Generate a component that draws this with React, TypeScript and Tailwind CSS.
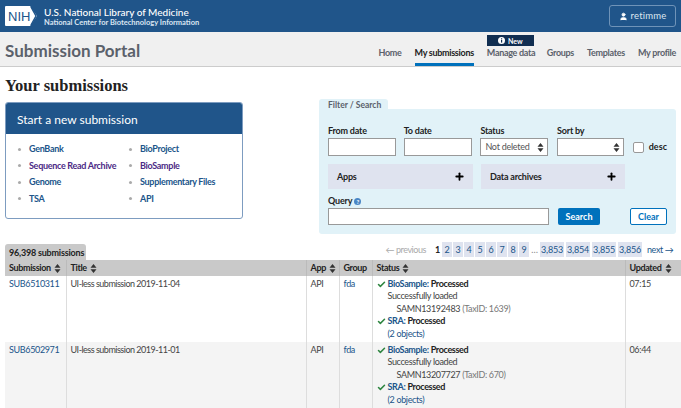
import { Plus, User, Check } from 'lucide-react'

const leftLinks = [
  { label: 'GenBank', visited: false },
  { label: 'Sequence Read Archive', visited: true },
  { label: 'Genome', visited: false },
  { label: 'TSA', visited: false },
]

const rightLinks = [
  { label: 'BioProject', visited: false },
  { label: 'BioSample', visited: true },
  { label: 'Supplementary Files', visited: false },
  { label: 'API', visited: false },
]

const pages = ['2', '3', '4', '5', '6', '7', '8', '9']
const lastPages = ['3,853', '3,854', '3,855', '3,856']

const rows = [
  { id: 'SUB6510311', title: 'UI-less submission 2019-11-04', sample: 'SAMN13192483', tax: '(TaxID: 1639)', time: '07:15', shade: false },
  { id: 'SUB6502971', title: 'UI-less submission 2019-11-01', sample: 'SAMN13207727', tax: '(TaxID: 670)', time: '06:44', shade: true },
]

function SortIcon({ className = 'inline-block ml-[3px]' }: { className?: string }) {
  return (
    <svg width="7" height="9" viewBox="0 0 7 9" className={`${className} fill-[#333]`}>
      <path d="M3.5 0 L6.5 3.8 H0.5 Z M3.5 9 L0.5 5.2 H6.5 Z" />
    </svg>
  )
}

function NihLogo() {
  return (
    <svg width="32" height="20" viewBox="0 0 32 20" className="shrink-0">
      <path d="M1 0 H25 L32 10 L25 20 H1 a1 1 0 0 1 -1 -1 V1 a1 1 0 0 1 1 -1 Z" fill="#fff" />
      <path d="M26 1 L31 10 L26 19" fill="none" stroke="#20558a" strokeWidth="1.5" />
      <text x="3" y="15" fontSize="13" fill="#20558a" fontFamily="'Liberation Sans', sans-serif">NIH</text>
    </svg>
  )
}

function LinkColumn({ links, width }: { links: { label: string; visited: boolean }[]; width: string }) {
  return (
    <ul className={`${width} flex flex-col gap-[4.6px]`}>
      {links.map(link => (
        <li key={link.label} className="flex items-center h-[12px] whitespace-nowrap">
          <span className="w-[3px] h-[3px] rounded-full bg-[#aaa] mr-[8px]" />
          <span className={`font-bold text-[9px] tracking-[-0.3px] ${link.visited ? 'text-[#4b2a85]' : 'text-[#20558a]'}`}>{link.label}</span>
        </li>
      ))}
    </ul>
  )
}

function Field({ label, width, children }: { label: string; width: string; children?: React.ReactNode }) {
  return (
    <div className={`${width} flex flex-col`}>
      <label className="font-bold text-[9px] tracking-[-0.2px] leading-[12px] mb-[1px] text-[#222]">{label}</label>
      <div className="h-[18px] bg-white border border-[#999] flex items-center justify-between pl-[4px] pr-[3px] text-[9px] tracking-[-0.25px] text-[#555] whitespace-nowrap">
        {children}
      </div>
    </div>
  )
}

export default function App() {
  return (
    <div className="w-[681px] h-[408px] overflow-hidden bg-white text-[#444] font-['Lato','Noto_Sans',sans-serif]">
      {/* top bar */}
      <div className="h-[32px] bg-[#20558a] flex items-center justify-between pl-[5px] pr-[5px]">
        <div className="flex items-center gap-[7px]">
          <NihLogo />
          <div className="text-white">
            <div className="text-[10px] leading-[12px] font-medium">U.S. National Library of Medicine</div>
            <div className="text-[7.5px] leading-[9px] font-bold text-[#dbe6f2]">National Center for Biotechnology Information</div>
          </div>
        </div>
        <div className="w-[67px] h-[22px] border border-[#6f93b8] rounded-[3px] flex items-center justify-center gap-[3px] text-[9.5px] text-[#dde6f0] tracking-[0.2px]">
          <User size={9} fill="#fff" stroke="#fff" />
          retimme
        </div>
      </div>

      {/* site nav */}
      <div className="h-[35px] bg-[#f0f0f0] border-b border-[#ccc] flex justify-between pl-[5px] pr-[5px]">
        <div className="text-[17px] leading-[38px] font-bold text-[#5b616b]">Submission Portal</div>
        <nav className="flex gap-[13px] text-[9px] tracking-[-0.3px] leading-[12px] font-bold text-[#5b616b] whitespace-nowrap">
          <span className="mt-[15px]">Home</span>
          <span className="mt-[15px] h-[19px] text-[#222] border-b-[3px] border-[#0071bc]">My submissions</span>
          <span className="relative mt-[15px] w-[47px]">
            <span className="absolute top-[-12px] left-0 w-[47px] h-[11px] bg-[#112e51] text-white text-[7px] tracking-normal flex items-center justify-center gap-[3px]">
              <svg width="7" height="7" viewBox="0 0 7 7">
                <circle cx="3.5" cy="3.5" r="3.5" fill="#fff" />
                <rect x="3" y="3" width="1.2" height="2.6" fill="#112e51" />
                <rect x="3" y="1.3" width="1.2" height="1.1" fill="#112e51" />
              </svg>
              New
            </span>
            Manage data
          </span>
          <span className="mt-[15px]">Groups</span>
          <span className="mt-[15px]">Templates</span>
          <span className="mt-[15px]">My profile</span>
        </nav>
      </div>

      <div className="px-[5px]">
        <h1 className="font-['Liberation_Serif',serif] font-bold text-[16.5px] leading-[20px] mt-[9px] text-[#222]">Your submissions</h1>

        <div className="flex mt-[3px]">
          {/* new submission card */}
          <div className="w-[238px] h-[117px] mt-[3px] border border-[#7d9cc0] rounded-[3px] overflow-hidden">
            <div className="h-[31px] bg-[#20558a] text-white text-[12px] leading-[33px] pl-[11px]">Start a new submission</div>
            <div className="flex pl-[12px] pt-[9px]">
              <LinkColumn links={leftLinks} width="w-[111px]" />
              <LinkColumn links={rightLinks} width="w-[110px]" />
            </div>
          </div>

          {/* filter panel */}
          <div className="ml-[76px] w-[357px]">
            <div className="w-[69px] h-[10px] bg-[#e1f2f8] rounded-t-[3px] text-[8.5px] font-bold text-[#5b616b] leading-[12px] pl-[9px]">Filter / Search</div>
            <div className="h-[125px] bg-[#e1f2f8] rounded-b-[3px] rounded-tr-[3px] pl-[9px] pr-[9px] pt-[16px]">
              <div className="flex">
                <Field label="From date" width="w-[68px] mr-[8px]" />
                <Field label="To date" width="w-[69px] mr-[8px]" />
                <Field label="Status" width="w-[68px] mr-[9px]">
                  Not deleted
                  <SortIcon className="" />
                </Field>
                <Field label="Sort by" width="w-[67px] mr-[9px]">
                  <span />
                  <SortIcon className="" />
                </Field>
                <div className="flex items-center mt-[13px] h-[18px]">
                  <span className="w-[11px] h-[11px] bg-white border border-[#999] rounded-[2px] mr-[5px]" />
                  <span className="font-bold text-[9px] text-[#222]">desc</span>
                </div>
              </div>
              <div className="flex mt-[8px] gap-[8px] text-[9px] tracking-[-0.2px] font-bold text-[#222]">
                <div className="w-[145px] h-[25px] bg-[#dfe3ef] flex items-center justify-between pl-[9px] pr-[8px]">
                  Apps
                  <Plus size={11} strokeWidth={4} color="#000" />
                </div>
                <div className="w-[144px] h-[25px] bg-[#dfe3ef] flex items-center justify-between pl-[9px] pr-[8px]">
                  Data archives
                  <Plus size={11} strokeWidth={4} color="#000" />
                </div>
              </div>
              <div className="mt-[6px] flex items-center font-bold text-[9px] tracking-[-0.2px] leading-[12px] text-[#222]">
                Query
                <span className="ml-[2px] w-[7px] h-[7px] rounded-full bg-[#4a86c5] text-white text-[6px] leading-[7px] text-center">?</span>
              </div>
              <div className="flex mt-[1px]">
                <div className="w-[221px] h-[17px] bg-white border border-[#999] mr-[9px]" />
                <div className="w-[42px] h-[17px] bg-[#0071bc] rounded-[2px] text-white text-[9px] font-bold flex items-center justify-center mr-[30px]">Search</div>
                <div className="w-[37px] h-[17px] bg-white border border-[#0071bc] rounded-[2px] text-[#0071bc] text-[9px] font-bold flex items-center justify-center">Clear</div>
              </div>
            </div>
          </div>
        </div>

        {/* pagination */}
        <div className="flex items-start justify-between mt-[8px] h-[18px]">
          <div className="w-[81px] h-[16px] mt-[2px] bg-[#c9c9c9] rounded-t-[3px] text-[9px] tracking-[-0.2px] font-bold leading-[17px] pl-[4px] text-[#222] whitespace-nowrap">96,398 submissions</div>
          <div className="flex items-center text-[9px] tracking-[-0.2px] text-[#20558a]">
            <span className="text-[#aaa] mr-[9px] tracking-[-0.45px]">← previous</span>
            <span className="font-bold text-[#222] mr-[2px] w-[5px]">1</span>
            <span className="flex gap-[1px]">
              {pages.map(page => (
                <span key={page} className="w-[10px] h-[15px] bg-[#dfe3ef] leading-[15px] text-center">{page}</span>
              ))}
            </span>
            <span className="text-[#888] w-[11px] text-center">…</span>
            <span className="flex gap-[2px]">
              {lastPages.map(page => (
                <span key={page} className="w-[24px] h-[15px] bg-[#dfe3ef] leading-[15px] text-center">{page}</span>
              ))}
            </span>
            <span className="ml-[5px] w-[29px] whitespace-nowrap tracking-[-0.4px]">next →</span>
          </div>
        </div>
      </div>

      {/* results */}
      <table className="ml-[5px] w-[676px] table-fixed border-collapse text-[9px] tracking-[-0.35px]">
        <colgroup>
          <col className="w-[61px]" />
          <col className="w-[240px]" />
          <col className="w-[33px]" />
          <col className="w-[33px]" />
          <col className="w-[253px]" />
          <col className="w-[56px]" />
        </colgroup>
        <thead>
          <tr className="h-[16px] bg-[#c9c9c9] text-left text-[#222]">
            <th className="pl-[4px] font-bold whitespace-nowrap">Submission<SortIcon /></th>
            <th className="pl-[4px] border-l border-[#bbb] font-bold">Title<SortIcon /></th>
            <th className="pl-[4px] border-l border-[#bbb] font-bold whitespace-nowrap">App<SortIcon /></th>
            <th className="pl-[4px] border-l border-[#bbb] font-bold">Group</th>
            <th className="pl-[4px] border-l border-[#bbb] font-bold">Status<SortIcon /></th>
            <th className="pl-[4px] border-l border-[#bbb] font-bold whitespace-nowrap">Updated<SortIcon /></th>
          </tr>
        </thead>
        <tbody>
          {rows.map(row => (
            <tr key={row.id} className={`h-[66px] align-top leading-[12.4px] ${row.shade ? 'bg-[#f4f4f4]' : 'bg-white'}`}>
              <td className="pl-[4px] pt-[2px] text-[#20558a]">{row.id}</td>
              <td className="pl-[4px] pt-[2px] border-l border-[#ddd] tracking-[-0.5px]">{row.title}</td>
              <td className="pl-[4px] pt-[2px] border-l border-[#ddd]">API</td>
              <td className="pl-[4px] pt-[2px] border-l border-[#ddd] text-[#20558a]">fda</td>
              <td className="pl-[4px] pt-[2px] border-l border-[#ddd]">
                <div className="flex items-center">
                  <Check size={9} strokeWidth={4} color="#2e8540" className="mr-[2px]" />
                  <span className="text-[#20558a] font-bold">BioSample:</span>
                  <span className="font-bold text-[#222] ml-[2px]">Processed</span>
                </div>
                <div className="pl-[11px]">Successfully loaded</div>
                <div className="pl-[20px]">{row.sample} <span className="text-[#777]">{row.tax}</span></div>
                <div className="flex items-center">
                  <Check size={9} strokeWidth={4} color="#2e8540" className="mr-[2px]" />
                  <span className="text-[#20558a] font-bold">SRA:</span>
                  <span className="font-bold text-[#222] ml-[2px]">Processed</span>
                </div>
                <div className="pl-[11px] text-[#20558a]">(2 objects)</div>
              </td>
              <td className="pl-[4px] pt-[2px] border-l border-[#ddd]">{row.time}</td>
            </tr>
          ))}
        </tbody>
      </table>
    </div>
  )
}
